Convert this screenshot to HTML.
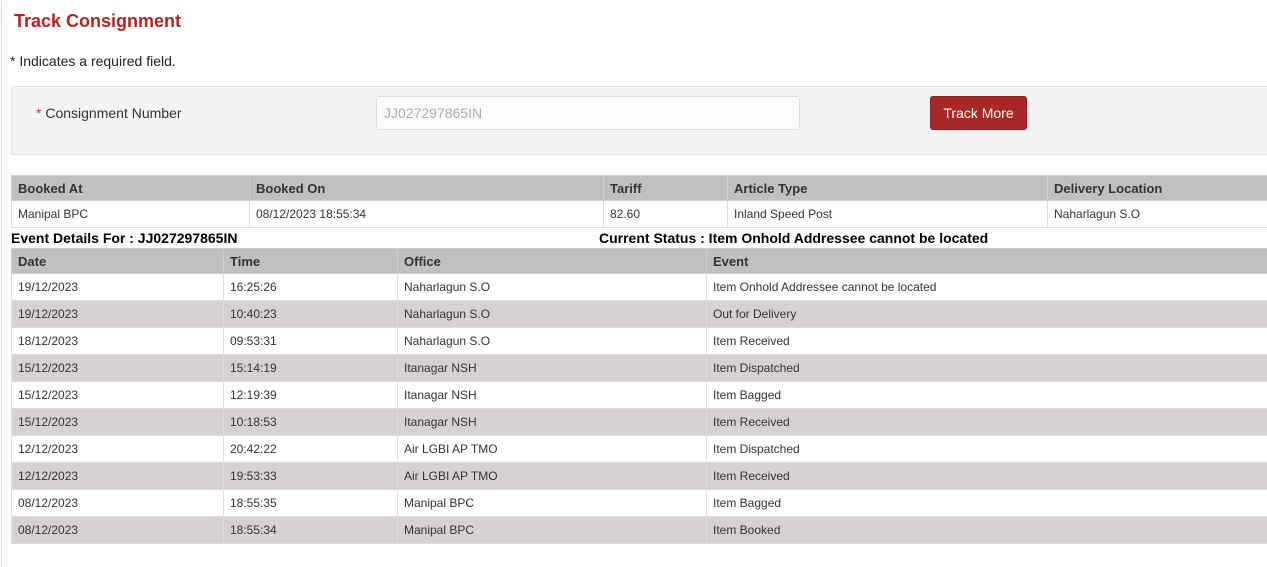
<!DOCTYPE html>
<html><head><meta charset="utf-8"><style>
*{box-sizing:border-box;margin:0;padding:0}
body{width:1267px;height:567px;overflow:hidden;background:#fff;font-family:"Liberation Sans",Arial,sans-serif;color:#333;position:relative}
.lb{position:absolute;left:1px;top:0;width:1px;height:567px;background:#e4e4e4}
h1{position:absolute;left:14px;top:11px;font-size:18px;font-weight:bold;color:#b22525}
.req{position:absolute;left:10px;top:53px;font-size:14px;color:#222}
.panel{position:absolute;left:11px;top:86px;width:1260px;height:69px;background:#f4f4f4;border:1px solid #e2e2e2;border-radius:3px}
.lbl{position:absolute;left:36px;top:105px;font-size:14px;color:#333}
.lbl span{color:#c0392b}
.inp{position:absolute;left:376px;top:96px;width:424px;height:34px;background:#fcfcfc;border:1px solid #dcdcdc;border-radius:3px;font-size:14px;color:#aaa;padding:8px 7px}
.btn{position:absolute;left:930px;top:96px;width:97px;height:34px;background:#a82828;border:1px solid #8c1f1f;border-radius:3px;color:#fff;font-size:14px;text-align:center;line-height:32px}
table{position:absolute;left:11px;border-collapse:collapse;width:1260px;font-size:12px}
td,th{border:1px solid #ddd;padding:0 6px;text-align:left;white-space:nowrap}
th{background:#c0c0c0;font-size:13px;font-weight:bold;color:#333;height:25px;border-color:#d0d0d0}
td{height:27px}
#t1{top:175px}
#t2{top:248px}
#t2 tr.g td{background:#d6d2d2}
.ev{position:absolute;top:230px;font-size:14px;font-weight:bold;color:#000}
</style></head><body>
<div class="lb"></div>
<h1>Track Consignment</h1>
<div class="req">* Indicates a required field.</div>
<div class="panel"></div>
<div class="lbl"><span>*</span> Consignment Number</div>
<div class="inp">JJ027297865IN</div>
<div class="btn">Track More</div>
<table id="t1">
<tr><th style="width:238px">Booked At</th><th style="width:354px">Booked On</th><th style="width:124px">Tariff</th><th style="width:320px">Article Type</th><th>Delivery Location</th></tr>
<tr><td>Manipal BPC</td><td>08/12/2023 18:55:34</td><td>82.60</td><td>Inland Speed Post</td><td>Naharlagun S.O</td></tr>
</table>
<div class="ev" style="left:11px">Event Details For : JJ027297865IN</div>
<div class="ev" style="left:599px">Current Status : Item Onhold Addressee cannot be located</div>
<table id="t2">
<tr><th style="width:212px">Date</th><th style="width:174px">Time</th><th style="width:309px">Office</th><th>Event</th></tr>
<tr><td>19/12/2023</td><td>16:25:26</td><td>Naharlagun S.O</td><td>Item Onhold Addressee cannot be located</td></tr>
<tr class="g"><td>19/12/2023</td><td>10:40:23</td><td>Naharlagun S.O</td><td>Out for Delivery</td></tr>
<tr><td>18/12/2023</td><td>09:53:31</td><td>Naharlagun S.O</td><td>Item Received</td></tr>
<tr class="g"><td>15/12/2023</td><td>15:14:19</td><td>Itanagar NSH</td><td>Item Dispatched</td></tr>
<tr><td>15/12/2023</td><td>12:19:39</td><td>Itanagar NSH</td><td>Item Bagged</td></tr>
<tr class="g"><td>15/12/2023</td><td>10:18:53</td><td>Itanagar NSH</td><td>Item Received</td></tr>
<tr><td>12/12/2023</td><td>20:42:22</td><td>Air LGBI AP TMO</td><td>Item Dispatched</td></tr>
<tr class="g"><td>12/12/2023</td><td>19:53:33</td><td>Air LGBI AP TMO</td><td>Item Received</td></tr>
<tr><td>08/12/2023</td><td>18:55:35</td><td>Manipal BPC</td><td>Item Bagged</td></tr>
<tr class="g"><td>08/12/2023</td><td>18:55:34</td><td>Manipal BPC</td><td>Item Booked</td></tr>
</table>
</body></html>
